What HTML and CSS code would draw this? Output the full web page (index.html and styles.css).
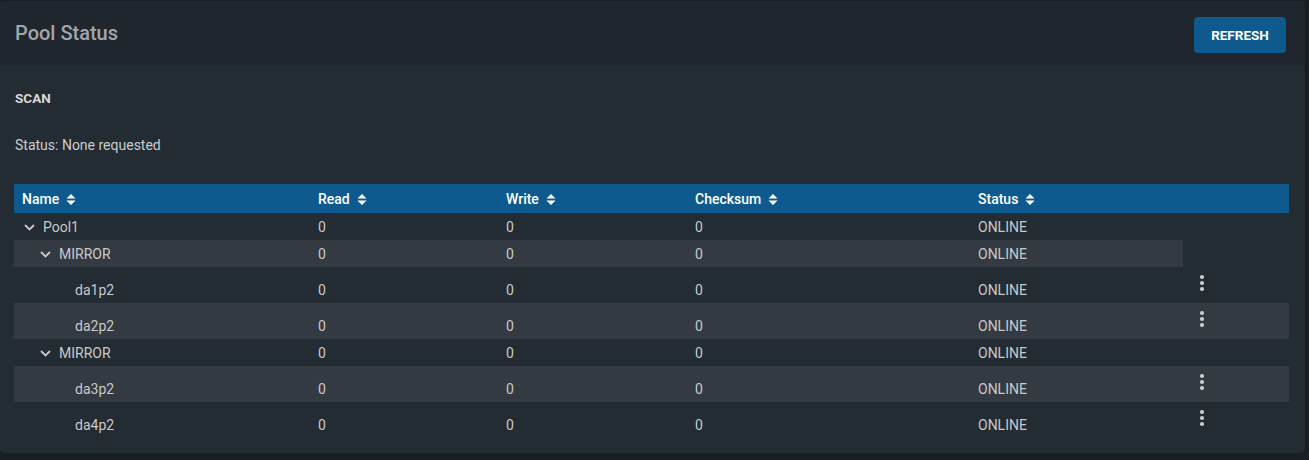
FILE: index.html
```html
<!DOCTYPE html>
<html>
<head>
<meta charset="utf-8">
<link rel="stylesheet" href="styles.css">
</head>
<body>
<div class="card">
  <div class="card-header">
    <h1 class="title">Pool Status</h1>
    <button class="btn-refresh">REFRESH</button>
  </div>
  <div class="card-body">
    <div class="scan-label">SCAN</div>
    <div class="scan-status">Status: None requested</div>
    <table class="pool-table">
      <colgroup>
        <col class="c-name"><col class="c-read"><col class="c-write"><col class="c-sum"><col class="c-status"><col class="c-act">
      </colgroup>
      <thead>
        <tr>
          <th><span class="th-label">Name</span><svg class="sort" viewBox="0 0 10 12"><path d="M0.5 5 L5 0.5 L9.5 5 Z M0.5 7 L9.5 7 L5 11.5 Z"/></svg></th>
          <th><span class="th-label">Read</span><svg class="sort" viewBox="0 0 10 12"><path d="M0.5 5 L5 0.5 L9.5 5 Z M0.5 7 L9.5 7 L5 11.5 Z"/></svg></th>
          <th><span class="th-label">Write</span><svg class="sort" viewBox="0 0 10 12"><path d="M0.5 5 L5 0.5 L9.5 5 Z M0.5 7 L9.5 7 L5 11.5 Z"/></svg></th>
          <th><span class="th-label">Checksum</span><svg class="sort" viewBox="0 0 10 12"><path d="M0.5 5 L5 0.5 L9.5 5 Z M0.5 7 L9.5 7 L5 11.5 Z"/></svg></th>
          <th><span class="th-label">Status</span><svg class="sort" viewBox="0 0 10 12"><path d="M0.5 5 L5 0.5 L9.5 5 Z M0.5 7 L9.5 7 L5 11.5 Z"/></svg></th>
          <th></th>
        </tr>
      </thead>
      <tbody>
        <tr class="group">
          <td><span class="lvl0"><svg class="chev" viewBox="0 0 11 7"><path d="M1 1 L5.5 5.5 L10 1"/></svg>Pool1</span></td>
          <td>0</td><td>0</td><td>0</td><td>ONLINE</td>
        </tr>
        <tr class="group alt">
          <td><span class="lvl1"><svg class="chev" viewBox="0 0 11 7"><path d="M1 1 L5.5 5.5 L10 1"/></svg>MIRROR</span></td>
          <td>0</td><td>0</td><td>0</td><td>ONLINE</td>
        </tr>
        <tr class="leaf">
          <td><span class="lvl2">da1p2</span></td>
          <td>0</td><td>0</td><td>0</td><td>ONLINE</td>
          <td class="act"><span class="kebab"><i></i><i></i><i></i></span></td>
        </tr>
        <tr class="leaf alt">
          <td><span class="lvl2">da2p2</span></td>
          <td>0</td><td>0</td><td>0</td><td>ONLINE</td>
          <td class="act"><span class="kebab"><i></i><i></i><i></i></span></td>
        </tr>
        <tr class="group">
          <td><span class="lvl1"><svg class="chev" viewBox="0 0 11 7"><path d="M1 1 L5.5 5.5 L10 1"/></svg>MIRROR</span></td>
          <td>0</td><td>0</td><td>0</td><td>ONLINE</td>
        </tr>
        <tr class="leaf alt">
          <td><span class="lvl2">da3p2</span></td>
          <td>0</td><td>0</td><td>0</td><td>ONLINE</td>
          <td class="act"><span class="kebab"><i></i><i></i><i></i></span></td>
        </tr>
        <tr class="leaf">
          <td><span class="lvl2">da4p2</span></td>
          <td>0</td><td>0</td><td>0</td><td>ONLINE</td>
          <td class="act"><span class="kebab"><i></i><i></i><i></i></span></td>
        </tr>
      </tbody>
    </table>
  </div>
</div>
</body>
</html>
```
FILE: styles.css
```css
html, body {
  margin: 0;
  padding: 0;
  background: #1a1f26;
  font-family: Roboto, "Liberation Sans", sans-serif;
  color: #c8c9ca;
}

.card {
  width: 1305px;
  height: 452px;
  margin-top: 1px;
  background: #232b33;
  border-radius: 4px;
  overflow: hidden;
  box-shadow: 0 1px 2px rgba(0,0,0,0.4);
}

.card-header {
  height: 64px;
  background: #20262e;
  display: flex;
  align-items: center;
  justify-content: space-between;
  padding: 0 19px 0 15px;
}

.title {
  margin: 0;
  font-size: 20px;
  font-weight: 500;
  color: #a2a6ab;
}

.btn-refresh {
  width: 92px;
  height: 36px;
  border: none;
  border-radius: 4px;
  background: #0e5a8f;
  color: #ffffff;
  font-family: Roboto, "Liberation Sans", sans-serif;
  font-size: 13.5px;
  font-weight: 700;
  padding: 0;
  margin-top: 3px;
}

.card-body {
  padding: 25px 16px 0 14px;
}

.scan-label {
  font-size: 13.5px;
  font-weight: 700;
  color: #d6d7d8;
  padding-left: 1px;
  line-height: 16px;
}

.scan-status {
  margin-top: 31px;
  font-size: 14px;
  color: #cacbcc;
  padding-left: 1px;
  line-height: 16px;
}

.pool-table {
  margin-top: 31px;
  width: 1275px;
  border-collapse: collapse;
  table-layout: fixed;
  font-size: 14px;
}

.c-name { width: 296px; }
.c-read { width: 188px; }
.c-write { width: 189px; }
.c-sum { width: 283px; }
.c-status { width: 213px; }
.c-act { width: 106px; }

.pool-table th {
  background: #0e5a8e;
  height: 29px;
  padding: 0 8px;
  text-align: left;
  font-weight: 500;
  color: #ffffff;
  vertical-align: middle;
}

.th-label {
  vertical-align: middle;
}

.sort {
  width: 10px;
  height: 13px;
  margin-left: 7px;
  vertical-align: middle;
  fill: #ffffff;
}

.pool-table td {
  padding: 0 8px;
  text-align: left;
  color: #c8c9ca;
  white-space: nowrap;
}

.group td {
  height: 27px;
  vertical-align: middle;
}

.leaf td {
  height: 36px;
  padding-top: 9px;
  box-sizing: border-box;
  vertical-align: middle;
}

.alt td {
  background: #343a41;
}

.lvl0 { display: inline-flex; align-items: center; padding-left: 2px; }
.lvl1 { display: inline-flex; align-items: center; padding-left: 18px; }
.lvl2 { display: inline-block; padding-left: 53px; }

.chev {
  width: 11px;
  height: 7px;
  margin-right: 8px;
  fill: none;
  stroke: #c8c9ca;
  stroke-width: 1.8;
}

.leaf td.act {
  padding: 0 0 0 17px;
  vertical-align: top;
}

.kebab {
  display: flex;
  flex-direction: column;
  align-items: center;
  gap: 2.5px;
  width: 4px;
  padding-top: 8px;
}

.kebab i {
  display: block;
  width: 3.5px;
  height: 3.5px;
  border-radius: 50%;
  background: #c8c9ca;
}
```
